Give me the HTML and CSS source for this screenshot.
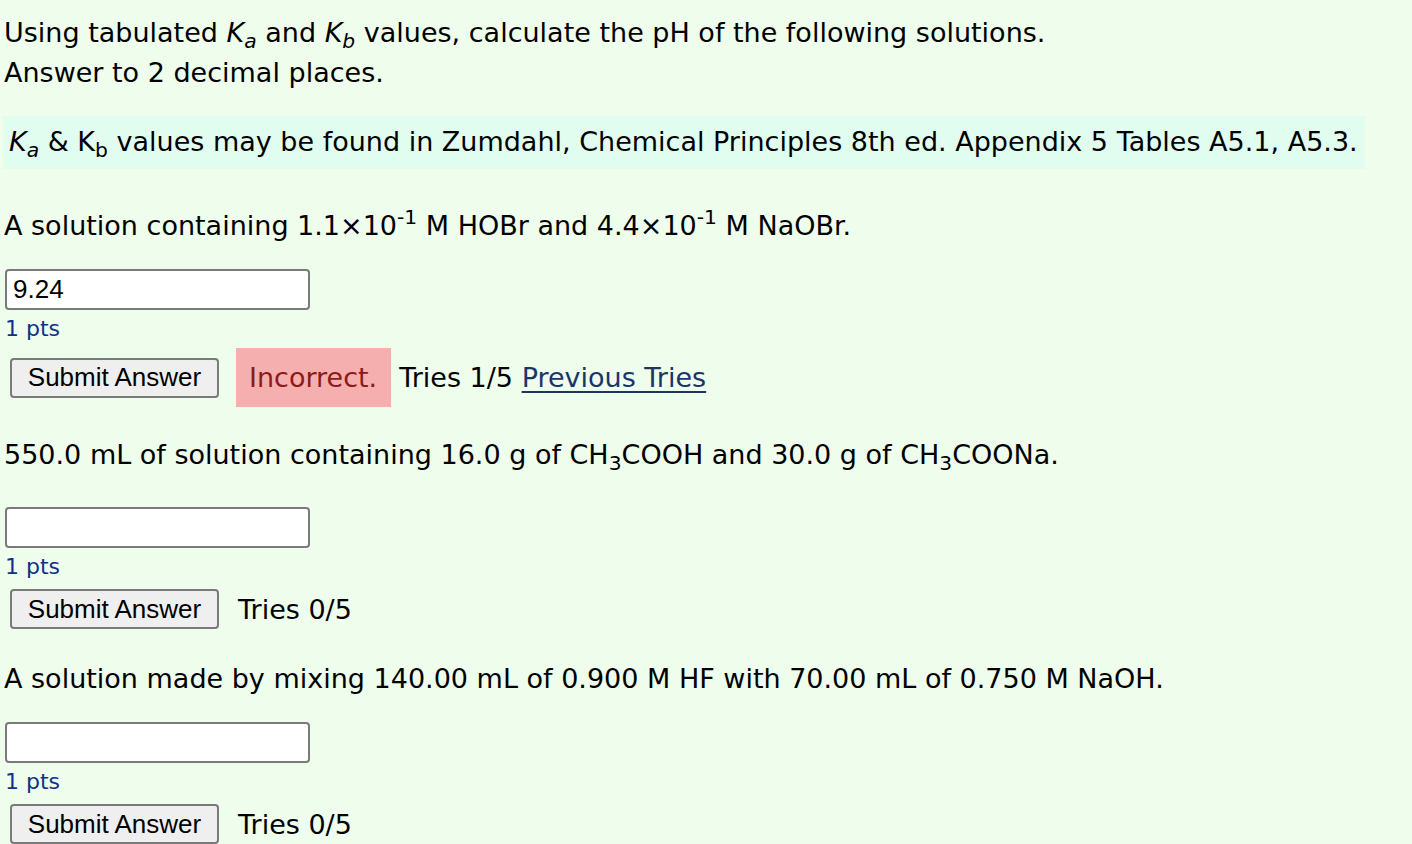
FILE: index.html
```html
<!DOCTYPE html>
<html>
<head>
<meta charset="utf-8">
<link rel="stylesheet" href="styles.css">
</head>
<body>
<div class="page">
  <p class="intro">Using tabulated <i>K<sub>a</sub></i> and <i>K<sub>b</sub></i> values, calculate the pH of the following solutions.<br>Answer to 2 decimal places.</p>
  <div class="note"><i>K<sub>a</sub></i> &amp; K<sub>b</sub> values may be found in Zumdahl, Chemical Principles 8th ed. Appendix 5 Tables A5.1, A5.3.</div>

  <div class="question q1">
    <p class="prompt">A solution containing 1.1×10<sup>-1</sup> M HOBr and 4.4×10<sup>-1</sup> M NaOBr.</p>
    <input class="answer" type="text" value="9.24">
    <div class="pts">1 pts</div>
    <div class="actions with-status">
      <button class="submit">Submit Answer</button>
      <span class="status incorrect">Incorrect.</span>
      <span class="tries">Tries 1/5 <a href="#" class="prev">Previous Tries</a></span>
    </div>
  </div>

  <div class="question q2">
    <p class="prompt">550.0 mL of solution containing 16.0 g of CH<sub>3</sub>COOH and 30.0 g of CH<sub>3</sub>COONa.</p>
    <input class="answer" type="text" value="">
    <div class="pts">1 pts</div>
    <div class="actions">
      <button class="submit">Submit Answer</button>
      <span class="tries plain">Tries 0/5</span>
    </div>
  </div>

  <div class="question q3">
    <p class="prompt">A solution made by mixing 140.00 mL of 0.900 M HF with 70.00 mL of 0.750 M NaOH.</p>
    <input class="answer" type="text" value="">
    <div class="pts">1 pts</div>
    <div class="actions">
      <button class="submit">Submit Answer</button>
      <span class="tries plain">Tries 0/5</span>
    </div>
  </div>
</div>
</body>
</html>
```

FILE: styles.css
```css
html, body {
  margin: 0;
  padding: 0;
  background: #eefdec;
}
body {
  font-family: "DejaVu Sans", Verdana, sans-serif;
  font-size: 27px;
  color: #000;
  overflow: hidden;
}
.page {
  padding: 13px 0 0 4px;
}
p { margin: 0; }
.intro {
  line-height: 40px;
}
sub, sup {
  font-size: 0.75em;
  line-height: 0;
}
sub { vertical-align: -0.28em; }
sup { vertical-align: 0.55em; }
.note {
  display: inline-block;
  margin: 23px 0 0 -1px;
  padding: 6px 7px 7px 6px;
  line-height: 40px;
  background: #e0fdf0;
}
.question .prompt {
  line-height: 40px;
}
.q1 { margin-top: 37px; }
.q2 { margin-top: 28px; }
.q3 { margin-top: 30px; }
.answer {
  display: block;
  box-sizing: border-box;
  width: 305px;
  height: 41px;
  margin: 23px 0 0 1px;
  padding: 0 6px;
  border: 2px solid #7a7a7a;
  border-radius: 4px;
  background: #fff;
  font-family: "Liberation Sans", Arial, sans-serif;
  font-size: 26px;
  color: #000;
}
.q2 .answer { margin-top: 32px; }
.q3 .answer { margin-top: 23px; }
.pts {
  height: 38px;
  line-height: 38px;
  font-size: 22px;
  color: #10308a;
  padding-left: 1px;
}
.actions {
  display: flex;
  align-items: center;
  padding-left: 6px;
}
.actions:not(.with-status) {
  padding-top: 3px;
}
.submit {
  box-sizing: border-box;
  width: 209px;
  height: 40px;
  padding: 0;
  border: 2px solid #7a7a7a;
  border-radius: 4px;
  background: #efefef;
  font-family: "Liberation Sans", Arial, sans-serif;
  font-size: 26px;
  color: #000;
}
.status.incorrect {
  margin-left: 17px;
  padding: 0 14px 0 13px;
  height: 59px;
  line-height: 59px;
  background: #f4afae;
  color: #8b1a1a;
}
.tries {
  margin-left: 8px;
}
.tries.plain {
  margin-left: 19px;
}
.prev {
  color: #1a3668;
  text-decoration: underline;
  text-underline-offset: 4px;
}
```
